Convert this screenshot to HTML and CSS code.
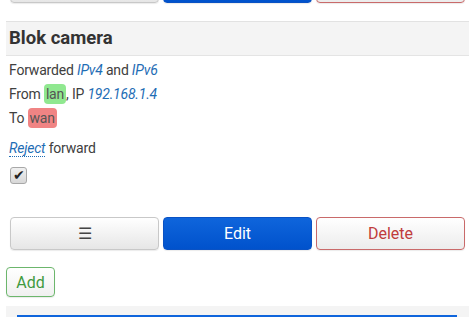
FILE: index.html
```html
<!DOCTYPE html>
<html>
<head>
<meta charset="utf-8">
<link rel="stylesheet" href="styles.css">
</head>
<body>
<div class="page">
  <div class="prev">
    <div class="actions top">
      <button class="btn" aria-label="Sort"></button>
      <button class="btn primary" aria-label="Edit"></button>
      <button class="btn danger" aria-label="Delete"></button>
    </div>
  </div>
  <div class="card">
    <div class="head"><h3 class="title">Blok camera</h3></div>
    <div class="body">
      <div class="line">Forwarded <i class="link">IPv4</i> and <i class="link">IPv6</i></div>
      <div class="line">From <span class="badge lan">lan</span>, IP <i class="link">192.168.1.4</i></div>
      <div class="line">To <span class="badge wan">wan</span></div>
      <div class="line action"><i class="link dotted">Reject</i> forward</div>
      <div class="check-row"><span class="check">✔</span></div>
    </div>
    <div class="actions">
      <button class="btn">☰</button>
      <button class="btn primary">Edit</button>
      <button class="btn danger">Delete</button>
    </div>
  </div>
  <div class="add-row"><button class="btn add">Add</button></div>
  <div class="next"><div class="bar"></div></div>
</div>
</body>
</html>
```
FILE: styles.css
```css
html, body {
  margin: 0;
  padding: 0;
  background: #fff;
  overflow: hidden;
}
body {
  font-family: Roboto, "Noto Sans", sans-serif;
  color: #404040;
  font-size: 14px;
}
.page {
  padding: 0 5px 0 6px;
}
.actions {
  display: flex;
  gap: 4px;
  padding: 0 4px;
}
.actions.top {
  margin-top: -29px;
}
.btn {
  font-family: Roboto, "Noto Sans", sans-serif;
  font-size: 16px;
  height: 33px;
  flex: 1;
  border: 1px solid #c8c8c8;
  border-radius: 4px;
  background: linear-gradient(#ffffff, #e6e6e6);
  color: #444;
  padding: 0;
  box-shadow: 0 1px 1px rgba(0,0,0,0.08);
}
.actions.top .btn {
  height: 32px;
}
.btn.primary {
  background: linear-gradient(#0f65dc, #0052cc);
  border-color: #0a52c4;
  color: #fff;
}
.btn.danger {
  background: linear-gradient(#ffffff, #ececec);
  border-color: #c96a6a;
  color: #c03c3c;
}
.card {
  margin-top: 18px;
  border-top: 1px solid #e2e2e2;
}
.head {
  background: #f4f4f4;
  border-bottom: 1px solid #e4e4e4;
  height: 33px;
  padding-left: 3px;
}
.title {
  margin: 0;
  font-size: 18.5px;
  font-weight: bold;
  line-height: 33px;
  color: #333;
}
.body {
  padding: 2px 0 0 3px;
  letter-spacing: -0.2px;
}
.line {
  line-height: 24px;
  height: 24px;
}
.line.action {
  margin-top: 6px;
}
.link {
  color: #1f6db5;
}
.dotted {
  border-bottom: 1px dotted #1f6db5;
}
.badge {
  display: inline-block;
  line-height: 20px;
  padding: 0 2px;
  border-radius: 4px;
  color: #555;
}
.lan {
  background: #90e890;
}
.wan {
  background: #f08484;
}
.check-row {
  margin-top: 7px;
  height: 17px;
}
.check {
  display: inline-block;
  width: 15px;
  height: 15px;
  margin-left: 1px;
  border: 1px solid #a8a8a8;
  border-radius: 3px;
  background: linear-gradient(#f0f0f0, #d8d8d8);
  font-size: 14px;
  line-height: 15px;
  text-align: center;
  color: #222;
}
.card .actions {
  margin-top: 33px;
}
.add-row {
  margin-top: 17px;
}
.btn.add {
  flex: none;
  width: 49px;
  height: 30px;
  border-color: #6cb66c;
  color: #3f9a3f;
  background: linear-gradient(#ffffff, #f0f0f0);
}
.next {
  margin-top: 9px;
  background: #f4f4f4;
  padding: 9px 12px 0 11px;
  height: 2px;
}
.bar {
  height: 2px;
  background: #0f65dc;
}
```
